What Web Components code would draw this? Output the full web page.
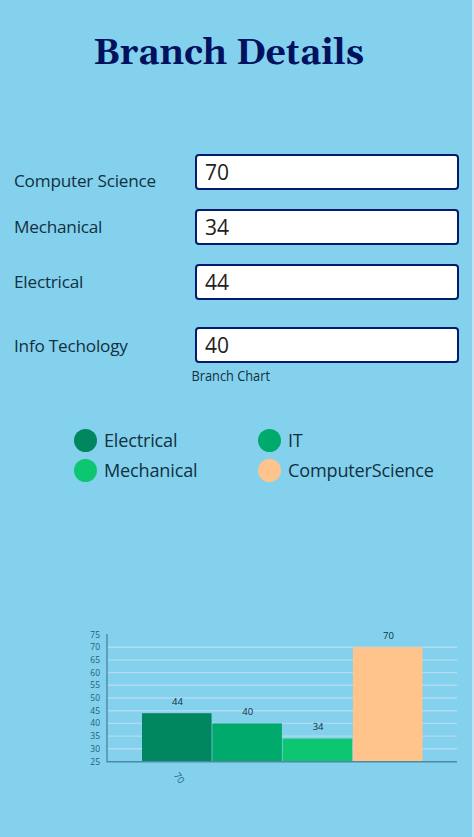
<!DOCTYPE html>
<html lang="en">
<head>
<meta charset="utf-8">
<title>Branch Details</title>
<style>
    body {
        margin: 0;
        background: #84d1ed;
        font-family: "Open Sans", "Noto Sans", sans-serif;
        color: #12303f;
    }
</style>
</head>
<body>
<branch-screen>
    <branch-title slot="title">Branch Details</branch-title>
    <branch-field value="70" style="--gap: 0px; --shift: 8.5px">Computer Science</branch-field>
    <branch-field value="34" style="--gap: 19px">Mechanical</branch-field>
    <branch-field value="44" style="--gap: 19px">Electrical</branch-field>
    <branch-field value="40" style="--gap: 27px; --shift: 0.5px">Info Techology</branch-field>
    <branch-legend slot="chart">
        <legend-item color="#00875f">Electrical</legend-item>
        <legend-item color="#00aa6c">IT</legend-item>
        <legend-item color="#0dc671">Mechanical</legend-item>
        <legend-item color="#ffc48c">ComputerScience</legend-item>
    </branch-legend>
    <branch-chart slot="chart" values="44,40,34,70" label="70"></branch-chart>
</branch-screen>

<script>
customElements.define('branch-screen', class extends HTMLElement {
    constructor() {
        super();
        this.attachShadow({ mode: 'open' }).innerHTML = `
            <style>
                :host {
                    display: block;
                    box-sizing: border-box;
                    width: 474px;
                    height: 837px;
                    overflow: hidden;
                    border-right: 2px solid #c3e1f2;
                    background: #84d1ed;
                }
                form {
                    display: flex;
                    flex-direction: column;
                    padding: 54px 13px 0 14px;
                }
                .caption {
                    display: block;
                    margin: 3px 0 0 191px;
                }
                .caption text { font-size: 14.2px; fill: #12303f; }
            </style>
            <slot name="title"></slot>
            <form><slot></slot></form>
            <svg class="caption" width="90" height="20">
                <text x="0.5" y="15" textLength="78.5" lengthAdjust="spacingAndGlyphs">Branch Chart</text>
            </svg>
            <slot name="chart"></slot>
        `;
    }
});

customElements.define('branch-title', class extends HTMLElement {
    constructor() {
        super();
        const text = this.textContent;
        this.attachShadow({ mode: 'open' }).innerHTML = `
            <style>
                :host { display: block; height: 100px; }
                svg { display: block; }
                text {
                    font: bold 35.5px Georgia, Gelasio, "Liberation Serif", serif;
                    fill: #00115f;
                }
            </style>
            <svg width="472" height="100">
                <text x="93" y="64" textLength="271" lengthAdjust="spacingAndGlyphs">${text}</text>
            </svg>
        `;
    }
});

customElements.define('branch-field', class extends HTMLElement {
    constructor() {
        super();
        this.attachShadow({ mode: 'open' }).innerHTML = `
            <style>
                :host {
                    display: grid;
                    grid-template: 36px / 181px 264px;
                    align-items: center;
                    margin-top: var(--gap, 0px);
                }
                label {
                    padding-top: calc(var(--shift, 0px) * 2);
                    font-size: 17.2px;
                    letter-spacing: -0.22px;
                    line-height: 24px;
                    white-space: nowrap;
                }
                .input {
                    box-sizing: border-box;
                    height: 36px;
                    padding-left: 8px;
                    border: 2px solid #051b6d;
                    border-radius: 4px;
                    background: #fff;
                    color: #222;
                    font-size: 21px;
                    line-height: 33px;
                }
            </style>
            <label><slot></slot></label>
            <div class="input">${this.getAttribute('value')}</div>
        `;
    }
});

customElements.define('branch-legend', class extends HTMLElement {
    constructor() {
        super();
        this.attachShadow({ mode: 'open' }).innerHTML = `
            <style>
                :host {
                    display: grid;
                    grid-template-columns: 184px 1fr;
                    grid-auto-rows: 30px;
                    padding: 39px 0 0 74px;
                }
            </style>
            <slot></slot>
        `;
    }
});

customElements.define('legend-item', class extends HTMLElement {
    constructor() {
        super();
        this.attachShadow({ mode: 'open' }).innerHTML = `
            <style>
                :host {
                    display: flex;
                    align-items: center;
                    gap: 7px;
                    font-size: 18.1px;
                    letter-spacing: -0.18px;
                    line-height: 30px;
                }
                i {
                    width: 23px;
                    height: 23px;
                    border-radius: 50%;
                    background: ${this.getAttribute('color')};
                }
            </style>
            <i></i><span><slot></slot></span>
        `;
    }
});

customElements.define('branch-chart', class extends HTMLElement {
    constructor() {
        super();
        const colors = ['#00875f', '#00aa6c', '#0dc671', '#ffc48c'];
        const values = this.getAttribute('values').split(',').map(Number);
        const bottom = 141.5;
        const scale = 2.54;
        let grid = '';
        for (let v = 25; v <= 75; v += 5) {
            const y = bottom - (v - 25) * scale;
            if (v > 25 && v < 75) {
                grid += `<line x1="107" x2="457" y1="${y}" y2="${y}" class="grid"/>`;
            }
            grid += `<text x="100" y="${y + 3}" class="tick">${v}</text>`;
        }
        const bars = values.map((v, i) => {
            const x = 142 + i * 70.3;
            const h = (v - 25) * scale;
            return `<rect x="${x}" y="${bottom - h}" width="69.6" height="${h}" fill="${colors[i]}"/>
                <text x="${x + 35.5}" y="${bottom - h - 8.5}" class="value">${v}</text>`;
        }).join('');
        this.attachShadow({ mode: 'open' }).innerHTML = `
            <style>
                :host { display: block; margin-top: 135px; }
                svg { display: block; }
                .grid { stroke: #b2daf1; stroke-width: 1.4; }
                .axis { stroke: #4f88a3; stroke-width: 1.4; }
                .tick { font-size: 8.5px; fill: #275e78; text-anchor: end; }
                .value { font-size: 9.5px; fill: #12303f; text-anchor: middle; }
            </style>
            <svg width="472" height="217">
                ${grid}
                ${bars}
                <path class="axis" fill="none" d="M107 14V141.7H457"/>
                <text class="tick" style="text-anchor: middle; font-size: 9.5px" transform="translate(179 158) rotate(55)" y="3">${this.getAttribute('label')}</text>
            </svg>
        `;
    }
});
</script>
</body>
</html>
